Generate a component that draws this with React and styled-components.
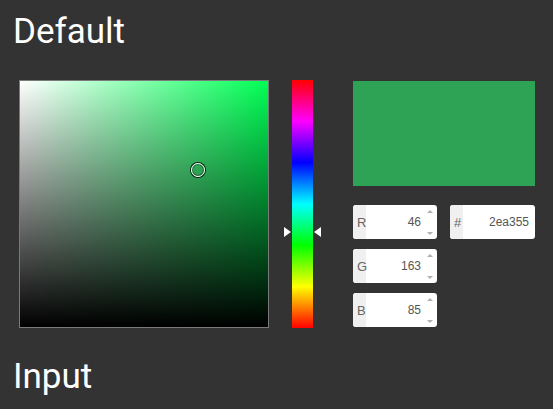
import styled, { createGlobalStyle } from "styled-components";

const GlobalStyle = createGlobalStyle`
  body {
    margin: 0;
    background: #333333;
    font-family: Roboto, "Liberation Sans", sans-serif;
  }
`;

const Page = styled.div`
  padding: 0 13px;
  height: 409px;
  overflow: hidden;
`;

const Title = styled.h2`
  margin: ${(p) => p.$top}px 0 0;
  font-size: 35px;
  font-weight: 400;
  line-height: 42px;
  color: #ffffff;
`;

const Picker = styled.div`
  display: flex;
  align-items: flex-start;
  margin: ${(p) => p.$top}px 0 0 6px;
`;

const SatBox = styled.div`
  position: relative;
  width: 248px;
  height: 246px;
  border: 1px solid #7a7a7a;
  background:
    linear-gradient(to top, #000 0%, rgba(0, 0, 0, 0) 100%),
    linear-gradient(to right, #fff 0%, rgba(255, 255, 255, 0) 100%),
    ${(p) => p.$hue};
`;

const Cursor = styled.div`
  position: absolute;
  width: 12px;
  height: 12px;
  margin: -7px 0 0 -7px;
  border: 1.5px solid #ffffff;
  border-radius: 50%;
  box-shadow: 0 0 0 1px rgba(0, 0, 0, 0.8), inset 0 0 0 1px rgba(0, 0, 0, 0.4);
`;

const HueBar = styled.div`
  position: relative;
  width: 21px;
  height: 248px;
  margin-left: 23px;
  background: linear-gradient(
    to bottom,
    #ff0000 0%,
    #ff00ff 16.67%,
    #0000ff 33.33%,
    #00ffff 50%,
    #00ff00 66.67%,
    #ffff00 83.33%,
    #ff0000 100%
  );
`;

const Arrow = styled.div`
  position: absolute;
  width: 0;
  height: 0;
  margin-top: -5px;
  border-top: 5px solid transparent;
  border-bottom: 5px solid transparent;
  ${(p) =>
    p.$side === "left"
      ? "left: -8px; border-left: 7px solid #fff;"
      : "right: -8px; border-right: 7px solid #fff;"}
`;

const Side = styled.div`
  display: flex;
  flex-direction: column;
  margin-left: 40px;
  padding-top: 1px;
`;

const Swatch = styled.div`
  width: 182px;
  height: 105px;
  background: ${(p) => p.$color};
`;

const Fields = styled.div`
  display: grid;
  grid-template-columns: 84px 85px;
  column-gap: 13px;
  row-gap: 10px;
  margin-top: 19px;
`;

const Field = styled.div`
  display: flex;
  align-items: center;
  height: 34px;
  background: #ffffff;
  border-radius: 3px;
  overflow: hidden;
  font-family: "Liberation Sans", Arial, sans-serif;
  font-size: 12px;
  grid-column: ${(p) => p.$col};
`;

const Label = styled.span`
  align-self: stretch;
  display: flex;
  align-items: center;
  width: 9px;
  padding-left: 4px;
  background: #f0f0f0;
  color: #666666;
  font-size: 13px;
  white-space: nowrap;
`;

const Value = styled.span`
  flex: 1;
  text-align: right;
  color: #555555;
  padding-right: ${(p) => (p.$spin ? 4 : 6)}px;
`;

const Spin = styled.div`
  display: flex;
  flex-direction: column;
  justify-content: space-between;
  align-self: stretch;
  width: 12px;
  padding: 5px 0 4px;
  box-sizing: border-box;
`;

const SpinArrow = styled.span`
  display: block;
  width: 0;
  height: 0;
  margin-left: 2px;
  border-left: 3px solid transparent;
  border-right: 3px solid transparent;
  ${(p) =>
    p.$up
      ? "border-bottom: 3px solid #b0b0b0;"
      : "border-top: 3px solid #b0b0b0;"}
`;

const rgb = { r: 46, g: 163, b: 85 };
const hex = "2ea355";

function toHsv({ r, g, b }) {
  const max = Math.max(r, g, b);
  const min = Math.min(r, g, b);
  const d = max - min;
  let h = 0;
  if (d) {
    if (max === r) h = ((g - b) / d) % 6;
    else if (max === g) h = (b - r) / d + 2;
    else h = (r - g) / d + 4;
    h *= 60;
    if (h < 0) h += 360;
  }
  return { h, s: max ? d / max : 0, v: max / 255 };
}

const NumberField = ({ label, value, col }) => (
  <Field $col={col}>
    <Label>{label}</Label>
    <Value $spin>{value}</Value>
    <Spin>
      <SpinArrow $up />
      <SpinArrow />
    </Spin>
  </Field>
);

const App = () => {
  const { h, s, v } = toHsv(rgb);
  const huePos = (1 - h / 360) * 100;

  return (
    <>
      <GlobalStyle />
      <Page>
        <Title $top={11}>Default</Title>
        <Picker $top={27}>
          <SatBox $hue={`hsl(${h}, 100%, 50%)`}>
            <Cursor style={{ left: `${s * 100}%`, top: `${(1 - v) * 100}%` }} />
          </SatBox>
          <HueBar>
            <Arrow $side="left" style={{ top: `${huePos}%` }} />
            <Arrow $side="right" style={{ top: `${huePos}%` }} />
          </HueBar>
          <Side>
            <Swatch $color={`#${hex}`} />
            <Fields>
              <NumberField label="R" value={rgb.r} col={1} />
              <Field $col={2}>
                <Label>#</Label>
                <Value>{hex}</Value>
              </Field>
              <NumberField label="G" value={rgb.g} col={1} />
              <NumberField label="B" value={rgb.b} col={1} />
            </Fields>
          </Side>
        </Picker>
        <Title $top={28}>Input</Title>
      </Page>
    </>
  );
};

export default App;
